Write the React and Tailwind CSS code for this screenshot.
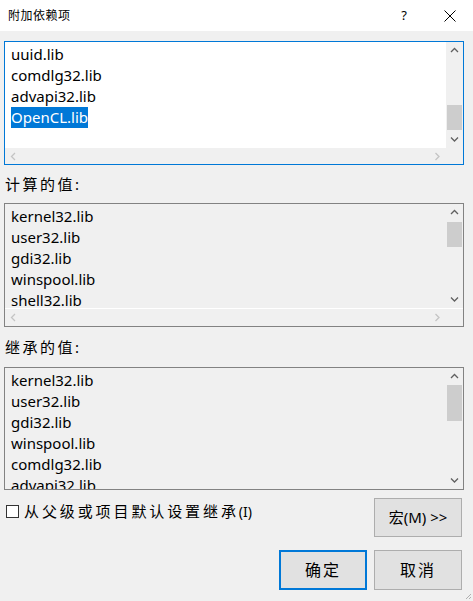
import React from "react";

const FONT = "font-['Noto_Sans','Noto_Sans_CJK_SC',sans-serif]";

function Chev({ dir, color = "#606060" }) {
  const pts = {
    up: "1,5 4.5,1.5 8,5",
    down: "1,1.5 4.5,5 8,1.5",
    left: "5,1 1.5,4.5 5,8",
    right: "1.5,1 5,4.5 1.5,8",
  }[dir];
  const vert = dir === "up" || dir === "down";
  return (
    <svg width={vert ? 9 : 7} height={vert ? 7 : 9} viewBox={vert ? "0 0 9 7" : "0 0 7 9"}>
      <polyline points={pts} fill="none" stroke={color} strokeWidth="1.3" />
    </svg>
  );
}

function VScroll({ thumbTop, thumbH }) {
  return (
    <div className="w-[17px] h-full bg-[#f0f0f0] flex flex-col">
      <div className="h-[17px] flex items-center justify-center shrink-0">
        <Chev dir="up" />
      </div>
      <div className="flex-1 min-h-0 overflow-hidden">
        <div className="bg-[#cdcdcd] mx-[1px]" style={{ marginTop: thumbTop, height: thumbH }} />
      </div>
      <div className="h-[17px] flex items-center justify-center shrink-0">
        <Chev dir="down" />
      </div>
    </div>
  );
}

function HScroll({ h }) {
  return (
    <div className={`flex bg-[#f0f0f0] ${h}`}>
      <div className="flex-1 flex items-center justify-between">
        <div className="w-[17px] flex justify-center">
          <Chev dir="left" color="#c4c4c4" />
        </div>
        <div className="w-[17px] flex justify-center">
          <Chev dir="right" color="#c4c4c4" />
        </div>
      </div>
      <div className="w-[17px]" />
    </div>
  );
}

function Lines({ items, selected }) {
  return (
    <div className="pt-[2px] pl-[6px] text-[15px] leading-[21px] text-black">
      {items.map((t) => (
        <div key={t} className="h-[21px] whitespace-nowrap">
          {t === selected ? (
            <span className="bg-[#0078d7] text-white inline-block h-[21px]">{t}</span>
          ) : (
            t
          )}
        </div>
      ))}
    </div>
  );
}

export default function App() {
  return (
    <div className={`relative w-[473px] h-[601px] bg-[#f0f0f0] flex flex-col ${FONT} overflow-hidden`}>
      {/* title bar */}
      <div className="h-[31px] bg-white flex items-center pl-[8px] shrink-0">
        <span className="text-[12px] text-black tracking-[0.5px]">附加依赖项</span>
        <span className="ml-auto text-[13px] text-black mr-[37px]">?</span>
        <svg width="12" height="12" viewBox="0 0 12 12" className="mr-[17px]">
          <path d="M0.5 0.5 L11.5 11.5 M11.5 0.5 L0.5 11.5" stroke="#000" strokeWidth="1" />
        </svg>
      </div>

      <div className="pl-[4px] pt-[10px] flex flex-col">
        {/* box 1 */}
        <div className="w-[460px] h-[124px] border border-[#0078d7] bg-white flex flex-col">
          <div className="flex h-[106px]">
            <div className="flex-1 overflow-hidden">
              <Lines items={["uuid.lib", "comdlg32.lib", "advapi32.lib", "OpenCL.lib"]} selected="OpenCL.lib" />
            </div>
            <VScroll thumbTop={46} thumbH={25} />
          </div>
          <HScroll h="h-[16px]" />
        </div>

        <div className="h-[38px] flex items-center pl-[1px] text-[15px] tracking-[2.5px] text-black">计算的值:</div>

        {/* box 2 */}
        <div className="w-[460px] h-[124px] border border-[#828282] bg-[#f0f0f0] flex flex-col">
          <div className="flex h-[105px] border-b border-white">
            <div className="flex-1 overflow-hidden">
              <Lines items={["kernel32.lib", "user32.lib", "gdi32.lib", "winspool.lib", "shell32.lib"]} />
            </div>
            <VScroll thumbTop={1} thumbH={25} />
          </div>
          <HScroll h="h-[17px]" />
        </div>

        <div className="h-[40px] flex items-center pl-[1px] text-[15px] tracking-[2.5px] text-black">继承的值:</div>

        {/* box 3 */}
        <div className="w-[460px] h-[123px] border border-[#828282] bg-[#f0f0f0] flex">
          <div className="flex-1 overflow-hidden">
            <Lines items={["kernel32.lib", "user32.lib", "gdi32.lib", "winspool.lib", "comdlg32.lib", "advapi32.lib"]} />
          </div>
          <VScroll thumbTop={0} thumbH={36} />
        </div>

        {/* checkbox + macro button */}
        <div className="flex items-start mt-[8px] w-[458px]">
          <label className="flex items-center mt-[6px] ml-[2px]">
            <span className="w-[13px] h-[13px] border border-[#333] bg-white shrink-0" />
            <span className="ml-[5px] text-[15px] tracking-[2.9px] text-black leading-[15px]">从父级或项目默认设置继承</span>
            <span className="text-[14px] text-black leading-[15px]">(I)</span>
          </label>
          <button className="ml-auto w-[88px] h-[39px] bg-[#e1e1e1] border border-[#adadad] text-[15px] text-black flex items-center justify-center">
            宏(M) &gt;&gt;
          </button>
        </div>

        {/* OK / Cancel */}
        <div className="flex justify-end mt-[13px] w-[458px] gap-[7px]">
          <button className="w-[88px] h-[40px] bg-[#e1e1e1] border-2 border-[#0078d7] text-[16px] tracking-[2px] text-black flex items-center justify-center">
            确定
          </button>
          <button className="w-[88px] h-[40px] bg-[#e1e1e1] border border-[#adadad] text-[16px] tracking-[2px] text-black flex items-center justify-center">
            取消
          </button>
        </div>
      </div>

      {/* resize grip */}
      <svg width="8" height="8" viewBox="0 0 8 8" className="absolute right-[1px] bottom-[1px]">
        <path d="M7 2 L2 7 M7 5 L5 7" stroke="#b0b0b0" strokeWidth="1" />
      </svg>
    </div>
  );
}
